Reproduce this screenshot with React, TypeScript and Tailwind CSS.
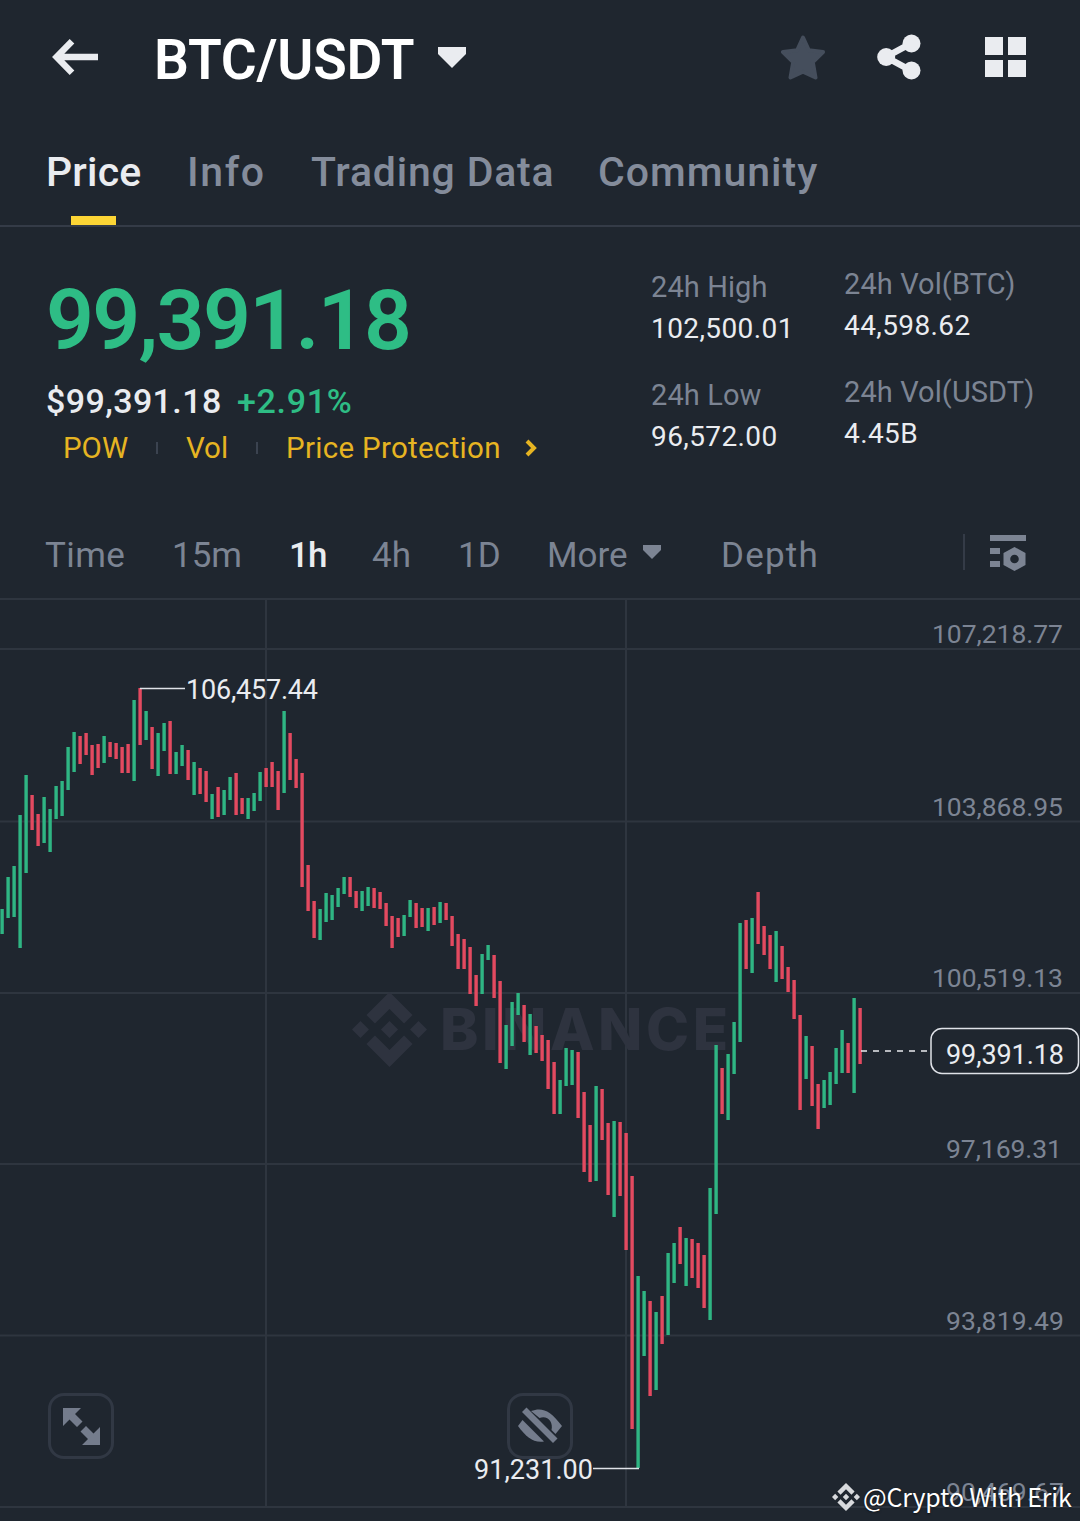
type Candle = [dir: "u" | "d", high: number, low: number];

// high / low are y coordinates inside the chart's viewBox
const candles: Candle[] = [
  ["u", 909, 934], ["u", 877, 918], ["u", 866, 917], ["u", 815, 948], ["u", 775, 873], ["d", 795, 830],
  ["d", 814, 846], ["u", 797, 843], ["u", 809, 852], ["u", 786, 819], ["u", 781, 816], ["u", 747, 790],
  ["u", 732, 772], ["d", 736, 764], ["d", 733, 755], ["d", 745, 775], ["d", 744, 768], ["u", 736, 763],
  ["d", 742, 757], ["d", 743, 759], ["d", 747, 773], ["d", 744, 773], ["u", 700, 781], ["d", 688, 745],
  ["u", 711, 740], ["d", 727, 769], ["u", 733, 776], ["u", 723, 751], ["d", 721, 774], ["u", 752, 774],
  ["u", 745, 766], ["d", 750, 780], ["u", 762, 795], ["d", 768, 794], ["d", 771, 802], ["u", 794, 819],
  ["d", 787, 817], ["u", 790, 815], ["u", 777, 800], ["d", 773, 815], ["d", 798, 814], ["u", 798, 819],
  ["u", 793, 811], ["u", 772, 801], ["d", 768, 787], ["d", 762, 787], ["d", 771, 810], ["u", 711, 793],
  ["d", 733, 780], ["d", 759, 788], ["d", 773, 887], ["d", 865, 911], ["d", 901, 938], ["u", 909, 940],
  ["u", 893, 922], ["u", 895, 920], ["u", 888, 907], ["u", 877, 894], ["d", 877, 897], ["d", 891, 908],
  ["u", 891, 911], ["u", 887, 906], ["d", 888, 908], ["d", 892, 909], ["d", 903, 926], ["d", 916, 948],
  ["d", 918, 937], ["u", 915, 936], ["u", 900, 917], ["d", 903, 928], ["d", 908, 927], ["u", 908, 931],
  ["d", 907, 925], ["u", 902, 923], ["d", 903, 920], ["d", 916, 946], ["d", 934, 969], ["d", 939, 969],
  ["d", 947, 994], ["d", 975, 1006], ["u", 954, 994], ["u", 945, 960], ["d", 955, 998], ["d", 981, 1063],
  ["u", 1025, 1069], ["u", 1002, 1046], ["u", 993, 1015], ["d", 1005, 1042], ["u", 1014, 1055], ["d", 1026, 1053],
  ["d", 1035, 1061], ["d", 1040, 1089], ["d", 1062, 1114], ["u", 1080, 1114], ["u", 1048, 1086], ["u", 1050, 1085],
  ["d", 1052, 1118], ["d", 1092, 1172], ["d", 1125, 1182], ["u", 1086, 1181], ["d", 1089, 1140], ["d", 1123, 1195],
  ["u", 1121, 1217], ["d", 1122, 1196], ["d", 1133, 1250], ["d", 1176, 1429], ["u", 1276, 1468], ["u", 1291, 1356],
  ["d", 1301, 1396], ["u", 1312, 1390], ["d", 1296, 1344], ["u", 1253, 1335], ["u", 1243, 1283], ["d", 1227, 1264],
  ["u", 1238, 1286], ["d", 1239, 1278], ["d", 1243, 1288], ["d", 1255, 1308], ["u", 1188, 1320], ["u", 1045, 1214],
  ["d", 1068, 1114], ["u", 1054, 1120], ["u", 1022, 1074], ["u", 923, 1042], ["d", 920, 969], ["u", 918, 973],
  ["d", 892, 944], ["d", 926, 955], ["d", 935, 969], ["u", 931, 982], ["d", 946, 979], ["d", 967, 992],
  ["d", 980, 1019], ["d", 1015, 1110], ["u", 1036, 1079], ["d", 1046, 1106], ["d", 1084, 1129], ["u", 1080, 1108],
  ["u", 1072, 1105], ["u", 1048, 1084], ["u", 1030, 1073], ["d", 1043, 1073], ["u", 998, 1093], ["d", 1008, 1064],
];

const axis = [
  { label: "107,218.77", line: 649, x: 932, w: 131 },
  { label: "103,868.95", line: 821.5, x: 932, w: 131 },
  { label: "100,519.13", line: 993, x: 932, w: 131 },
  { label: "97,169.31", line: 1164, x: 946, w: 116 },
  { label: "93,819.49", line: 1335.5, x: 946, w: 118 },
  { label: "90,469.67", line: 1507, x: 946, w: 118 },
];

const stats = [
  [
    { label: "24h High", value: "102,500.01" },
    { label: "24h Low", value: "96,572.00" },
  ],
  [
    { label: "24h Vol(BTC)", value: "44,598.62" },
    { label: "24h Vol(USDT)", value: "4.45B" },
  ],
];

function BinanceMark({ className }: { className?: string }) {
  return (
    <svg viewBox="0 0 126.6 126.6" className={className} fill="currentColor">
      <path d="M38.7 53.2 63.3 28.6l24.6 24.6 14.3-14.3L63.3 0 24.4 38.9zM0 63.3 14.3 49l14.3 14.3-14.3 14.3zM38.7 73.4 63.3 98l24.6-24.6 14.3 14.3-38.9 38.9-38.9-38.9zM98 63.3 112.3 49l14.3 14.3-14.3 14.3zM77.8 63.3 63.3 48.8 48.8 63.3l14.5 14.5z" />
    </svg>
  );
}

function Header() {
  return (
    <header className="flex h-[114px] items-center pr-[54px] pl-[52px] text-[#eaecf0]">
      <svg className="h-[36px] w-[46px]" viewBox="0 0 46 36" fill="none" stroke="currentColor" strokeWidth="6.5">
        <path d="M46 18H5M20 2.3 4.6 18 20 33.7" />
      </svg>
      <h1 className="ml-[56px] w-[263px] pt-[6px] text-[55px] leading-[60px] font-semibold tracking-[-0.2px] whitespace-nowrap text-white">
        BTC/USDT
      </h1>
      <svg className="ml-[21px] h-[22px] w-[28px]" viewBox="0 0 28 22" fill="currentColor">
        <path d="M0 1h28v7L14 22 0 8z" />
      </svg>
      <div className="ml-auto flex items-center">
        <svg className="h-[46px] w-[46px] text-[#454e5c]" viewBox="0 0 46 46" fill="currentColor" stroke="currentColor" strokeWidth="4" strokeLinejoin="round">
          <path d="m23 3.5 5.8 12.8 14.2 1.7-10.2 10 2.7 15.5L23 37.8 10.5 43.5l2.7-15.5L3 18l14.2-1.7z" />
        </svg>
        <svg className="ml-[51px] h-[46px] w-[44px]" viewBox="0 0 44 46" fill="currentColor" stroke="currentColor" strokeWidth="6.5">
          <path d="M34.5 9.2 9 23l25.5 13.8" fill="none" />
          <g stroke="none">
            <circle cx="9.2" cy="23" r="9" />
            <circle cx="34.5" cy="9.5" r="9" />
            <circle cx="34.5" cy="36.5" r="9" />
          </g>
        </svg>
        <div className="ml-[64px] grid h-[40px] w-[41px] grid-cols-2 gap-[5px]">
          <span className="bg-current" />
          <span className="bg-current" />
          <span className="bg-current" />
          <span className="bg-current" />
        </div>
      </div>
    </header>
  );
}

function Tabs() {
  return (
    <nav className="flex h-[113px] items-center border-b-2 border-[#343b47] pl-[46px] text-[41px] font-medium whitespace-nowrap text-[#848c9b]">
      <div className="relative flex h-full w-[141px] items-center pt-[6px] text-[#eaecf0]">
        <span className="tracking-[0.2px]">Price</span>
        <span className="absolute bottom-0 left-[25px] h-[9px] w-[45px] bg-[#fcd535]" />
      </div>
      <div className="w-[124px] pt-[6px] tracking-[1.6px]">Info</div>
      <div className="w-[287px] pt-[6px] tracking-[0.8px]">Trading Data</div>
      <div className="pt-[6px] tracking-[1px]">Community</div>
    </nav>
  );
}

function PricePanel() {
  return (
    <section className="flex h-[287px] whitespace-nowrap">
      <div className="w-[651px] pt-[49px] pl-[46px]">
        <div className="text-[84px] leading-[90px] font-semibold tracking-[-1.7px] text-[#2ebd85]">99,391.18</div>
        <div className="mt-[11px] flex text-[34px] leading-[48px] font-medium">
          <span className="w-[191px] tracking-[0.4px] text-[#eaecf0]">$99,391.18</span>
          <span className="tracking-[0.7px] text-[#2ebd85]">+2.91%</span>
        </div>
        <div className="flex items-center text-[29.5px] leading-[46px] text-[#e6b422]">
          <span className="ml-[17px] w-[93px]">POW</span>
          <span className="h-[12px] w-[2px] bg-[#3b4350]" />
          <span className="ml-[28px] w-[70px]">Vol</span>
          <span className="h-[12px] w-[2px] bg-[#3b4350]" />
          <span className="ml-[28px] w-[239px] tracking-[0.3px]">Price Protection</span>
          <svg className="h-[18px] w-[12px]" viewBox="0 0 12 18" fill="none" stroke="currentColor" strokeWidth="4">
            <path d="m2 2 7 7-7 7" />
          </svg>
        </div>
      </div>

      {stats.map((col, i) => (
        <div key={i} className={i === 0 ? "w-[193px] pt-[39px]" : "pt-[36px]"}>
          {col.map((s) => (
            <div key={s.label} className="mb-[24px] leading-[42px]">
              <div className="text-[29px] tracking-[0.1px] text-[#7c8493]">{s.label}</div>
              <div className="text-[28px] tracking-[0.4px] text-[#eaecf0]">{s.value}</div>
            </div>
          ))}
        </div>
      ))}
    </section>
  );
}

function Intervals() {
  return (
    <div className="flex h-[84px] items-center pt-px pl-[45px] text-[35px] whitespace-nowrap text-[#7c8493]">
      <span className="w-[127px] tracking-[0.4px]">Time</span>
      <span className="w-[117px]">15m</span>
      <span className="w-[83px] font-medium tracking-[-0.8px] text-[#eaecf0]">1h</span>
      <span className="w-[86px]">4h</span>
      <span className="w-[89px]">1D</span>
      <span className="w-[96px]">More</span>
      <svg className="mb-[10px] h-[14px] w-[18px]" viewBox="0 0 18 14" fill="currentColor">
        <path d="M0 0h18v5l-9 9-9-9z" />
      </svg>
      <span className="ml-[60px] w-[242px] tracking-[1.2px]">Depth</span>
      <span className="mb-[10px] h-[36px] w-[2px] bg-[#343b47]" />
      <svg className="mb-[8px] ml-[25px] h-[36px] w-[36px]" viewBox="0 0 36 36" fill="currentColor">
        <path d="M0 0h36v6H0zM0 13h10v6H0zM0 26h10v6H0z" />
        <path fillRule="evenodd" d="m24.5 12 11 6v12l-11 6-11-6V18zm0 7.7a4.3 4.3 0 1 0 0 8.6 4.3 4.3 0 0 0 0-8.6z" />
      </svg>
    </div>
  );
}

function Chart() {
  return (
    <section className="relative h-[923px] overflow-hidden">
      <svg className="block h-[923px] w-[1080px]" viewBox="0 598 1080 923">
        <g stroke="#2e353f" strokeWidth="2">
          <path d="M0 598.5H1080" strokeWidth="3" />
          <path d="M266 600V1507M626 600V1507" />
          {axis.map((a) => (
            <path key={a.label} d={`M0 ${a.line}H1080`} />
          ))}
        </g>

        <text x="440" y="1050" textLength="288" fontSize="58" fontWeight="800" fill="#2e333f" className="font-[Inter,sans-serif]">
          BINANCE
        </text>

        {candles.map(([dir, high, low], i) => (
          <rect key={i} x={0.4 + i * 6} y={high} width="3.4" height={low - high} fill={dir === "u" ? "#2fb583" : "#e34a60"} />
        ))}

        <g fontSize="26.5" fill="#7c8493">
          {axis.map((a) => (
            <text key={a.label} x={a.x} y={a.line - 6} textLength={a.w}>
              {a.label}
            </text>
          ))}
        </g>

        {/* high / low callouts */}
        <g fontSize="27" fill="#eaecf0">
          <path d="M140 688.5H185M593 1468.5H639" stroke="#dfe2e8" strokeWidth="1.5" />
          <text x="186" y="699" textLength="132">106,457.44</text>
          <text x="474" y="1479" textLength="119">91,231.00</text>
        </g>

        {/* last price */}
        <path d="M861 1051H931" stroke="#eaecf0" strokeWidth="1.5" strokeDasharray="6 6" />
        <rect x="931" y="1028.5" width="147.5" height="45" rx="11" fill="#1f262f" stroke="#dfe2e8" strokeWidth="1.5" />
        <text x="946" y="1064" textLength="118" fontSize="27" fill="#eaecf0">99,391.18</text>
      </svg>

      <BinanceMark className="absolute top-[394px] left-[352px] h-[75px] w-[75px] text-[#2e333f]" />

      <button className="absolute top-[795px] left-[48px] flex h-[66px] w-[66px] items-center justify-center rounded-[16px] border-[3px] border-[#313844] text-[#747c8c]">
        <svg className="h-[37px] w-[37px]" viewBox="0 0 37 37" fill="currentColor">
          <path d="M0 0h18l-6 6 7.5 7.5-5.5 5.5-7.5-7.5L0 18zM37 37H19l6-6-7.5-7.5 5.5-5.5 7.5 7.5L37 19z" />
        </svg>
      </button>
      <button className="absolute top-[795px] left-[507px] flex h-[66px] w-[66px] items-center justify-center rounded-[16px] border-[3px] border-[#313844] text-[#747c8c]">
        <svg className="h-[38px] w-[44px]" viewBox="0 0 44 38" fill="currentColor">
          <path d="m8.5 0.5 31 31-4.5 4.5-31-31z" />
          <path d="M13 4C24 0 32 3 44 19l-6.5 8-4-4c2-8-4-15-12-12z" />
          <path d="m4.5 13 21.5 21.5C15 36 8 30 0 19z" />
        </svg>
      </button>

      <div className="absolute top-[880px] left-[832px] flex h-[37px] items-center whitespace-nowrap text-white">
        <BinanceMark className="h-[28px] w-[28px] text-[#d8dadd]" />
        <span className="ml-[3px] font-['Noto_Sans_CJK_SC',sans-serif] text-[25px] leading-[37px] tracking-[-0.2px] [text-shadow:0_1px_2px_rgba(0,0,0,0.5)]">
          @Crypto With Erik
        </span>
      </div>
    </section>
  );
}

export default function App() {
  return (
    <main className="h-[1521px] w-[1080px] overflow-hidden bg-[#1f262f] font-[Roboto,sans-serif]">
      <Header />
      <Tabs />
      <PricePanel />
      <Intervals />
      <Chart />
    </main>
  );
}
